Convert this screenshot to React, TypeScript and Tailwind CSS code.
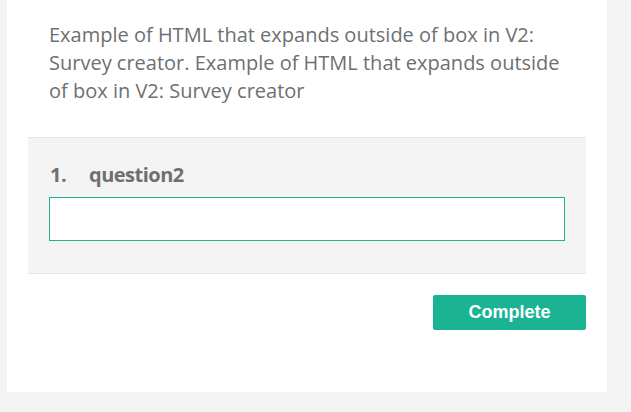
export default function App() {
  return (
    <div className="w-full h-[412px] bg-[#f3f3f3]">
      <div className="ml-[7px] w-[600px] h-[392px] bg-white flex flex-col">
        <div
          className="ml-[42px] w-[516px] pt-[21px] text-[20px] leading-[28px] text-[#6d7072]"
          style={{ fontFamily: '"Open Sans", sans-serif' }}
        >
          Example of HTML that expands outside of box in V2: Survey creator. Example of HTML that expands outside of box in V2: Survey creator
        </div>
        <div className="ml-[21px] mt-[32px] w-[558px] bg-[#f4f4f4] border-y border-[#e7e7e7] px-[21px] pt-[23px] pb-[32px]">
          <div
            className="flex text-[20px] leading-[28px] font-bold text-[#6d7072] tracking-[-0.5px]"
            style={{ fontFamily: '"Open Sans", sans-serif' }}
          >
            <span className="ml-[1px] w-[39px]">1.</span>
            <span>question2</span>
          </div>
          <input
            type="text"
            className="mt-[8px] block w-[516px] h-[44px] bg-white border border-[#1ab394] outline-none"
          />
        </div>
        <div className="ml-[426px] mt-[21px] w-[153px]">
          <button
            className="w-[153px] h-[35px] rounded-[2px] bg-[#1ab394] text-white text-[18px] font-bold"
            style={{ fontFamily: '"Liberation Sans", Arial, sans-serif' }}
          >
            Complete
          </button>
        </div>
      </div>
    </div>
  );
}
